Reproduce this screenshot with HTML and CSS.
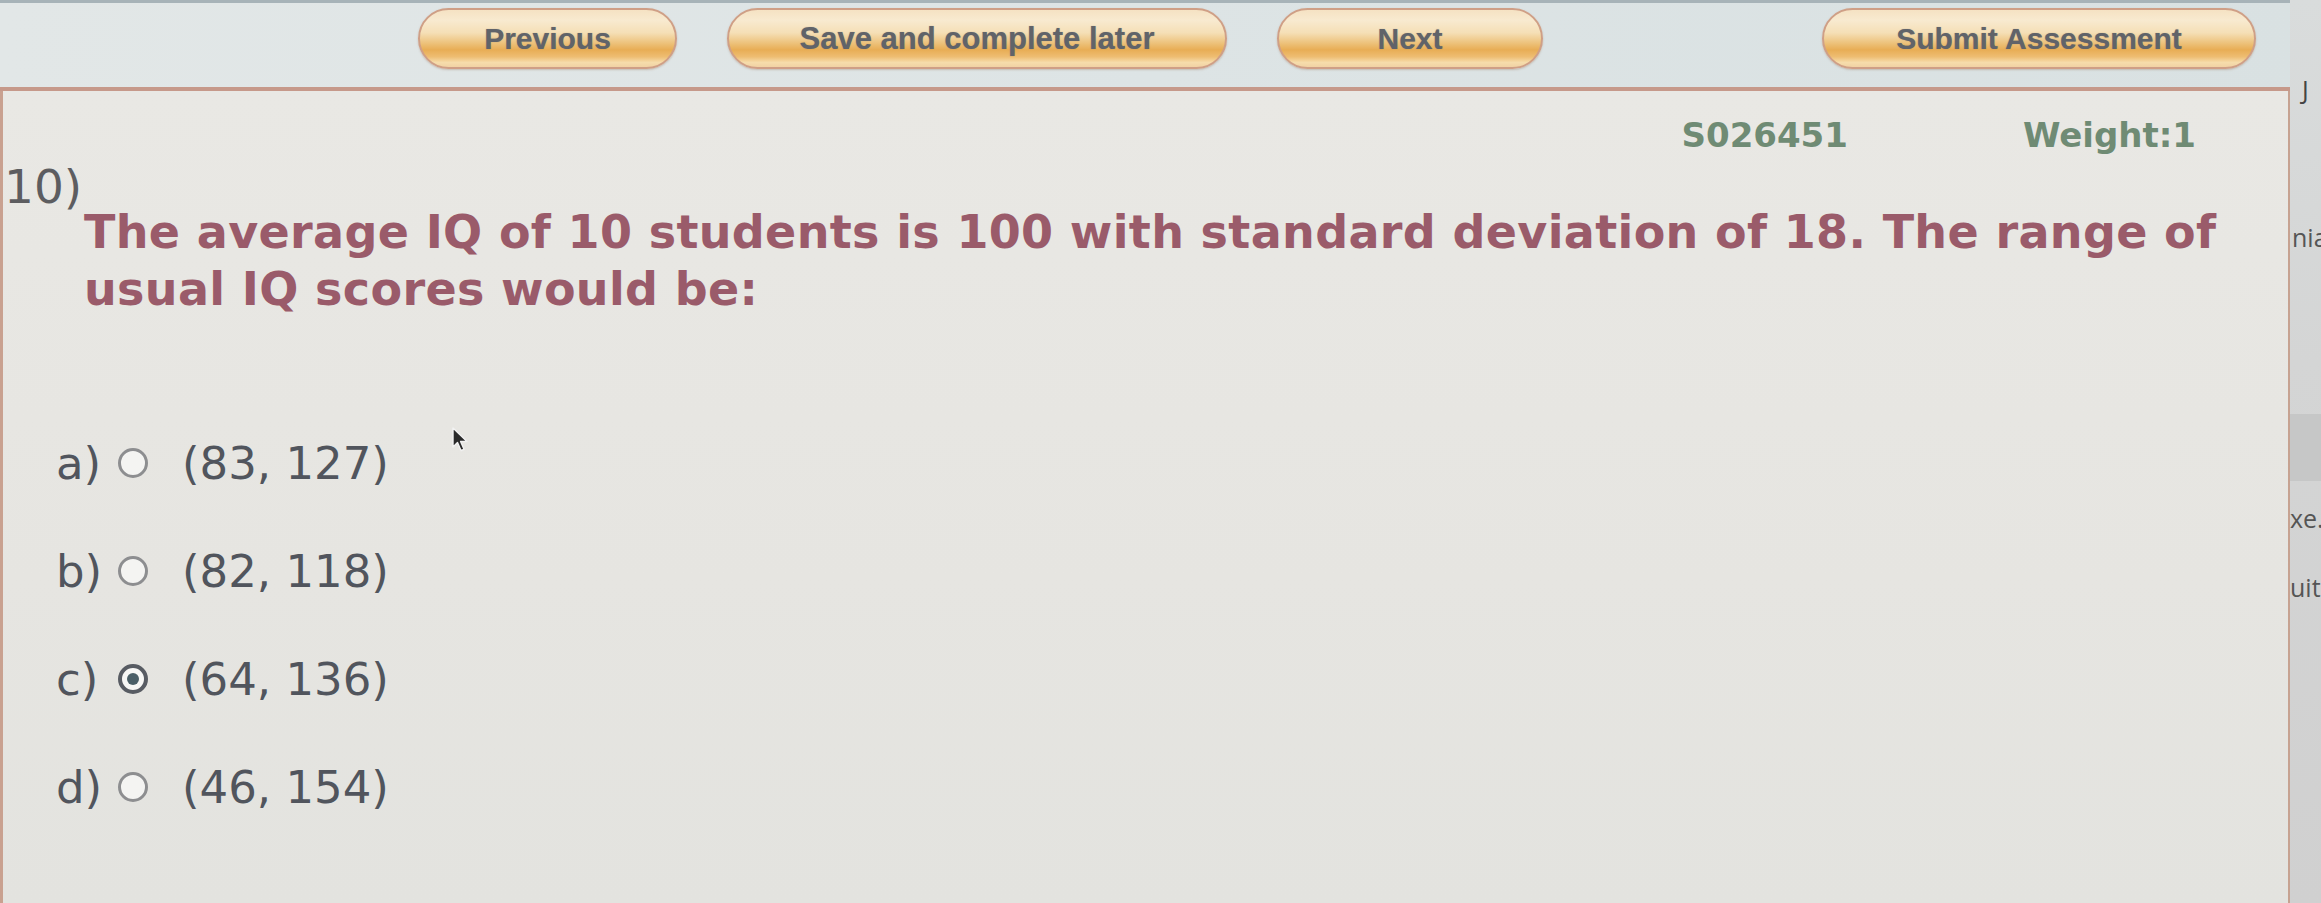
FILE: index.html
```html
<!DOCTYPE html>
<html lang="en">
<head>
<meta charset="utf-8">
<title>Assessment</title>
<link rel="stylesheet" href="styles.css">
</head>
<body>
<div class="app">
  <div class="main">
    <div class="toolbar">
      <button class="btn btn-prev">Previous</button>
      <button class="btn btn-save">Save and complete later</button>
      <button class="btn btn-next">Next</button>
      <button class="btn btn-submit">Submit Assessment</button>
    </div>
    <div class="panel">
      <div class="meta">
        <span class="code">S026451</span>
        <span class="weight">Weight:1</span>
      </div>
      <div class="qnum">10)</div>
      <div class="question">The average IQ of 10 students is 100 with standard deviation of 18. The range of usual IQ scores would be:</div>
      <div class="options">
        <div class="opt"><span class="letter">a)</span><span class="radio"></span><span class="val">(83, 127)</span></div>
        <div class="opt"><span class="letter">b)</span><span class="radio"></span><span class="val">(82, 118)</span></div>
        <div class="opt"><span class="letter">c)</span><span class="radio checked"></span><span class="val">(64, 136)</span></div>
        <div class="opt"><span class="letter">d)</span><span class="radio"></span><span class="val">(46, 154)</span></div>
      </div>
      <svg class="cursor" width="18" height="26" viewBox="0 0 18 26"><path d="M1 1 L1 20 L5.5 15.5 L9 23.5 L12 22.3 L8.6 14.5 L15 14.5 Z" fill="#2a2a2a" stroke="#f2f2f2" stroke-width="1.4" stroke-linejoin="round"/></svg>
    </div>
  </div>
  <div class="side">
    <div class="side-top">J</div>
    <div class="side-txt s1">nia</div>
    <div class="side-band"></div>
    <div class="side-txt s2">xe.</div>
    <div class="side-txt s3">uit.</div>
  </div>
</div>
</body>
</html>
```
FILE: styles.css
```css
html, body {
  margin: 0;
  padding: 0;
}
body {
  width: 2321px;
  height: 903px;
  overflow: hidden;
  background: #d4d6d6;
  font-family: "DejaVu Sans", Verdana, sans-serif;
}
.app {
  display: grid;
  grid-template-columns: 2290px 31px;
  height: 903px;
}
.main {
  display: flex;
  flex-direction: column;
  height: 903px;
}
.toolbar {
  height: 91px;
  flex: none;
  box-sizing: border-box;
  border-top: 3px solid #a7b3b8;
  border-bottom: 4px solid #c6998a;
  background: linear-gradient(to right, #e2e7e7 0%, #dde4e5 50%, #d9e1e2 100%);
  display: flex;
  align-items: flex-start;
  padding-left: 418px;
  padding-top: 5px;
  width: 2305px;
}
.btn {
  height: 61px;
  box-sizing: border-box;
  border: 2px solid #cf9f86;
  border-radius: 31px;
  background: linear-gradient(to bottom,
    #f5e2c3 0%, #f8ead0 18%, #f5dfb6 40%, #edc27b 58%,
    #e8ad55 70%, #eebd72 82%, #f6dcab 92%, #f1d2a4 100%);
  color: #606369;
  font-family: "Liberation Sans", Arial, sans-serif;
  font-weight: bold;
  font-size: 30px;
  padding: 0;
  margin: 0;
  text-shadow: 0 0 1px rgba(90, 90, 95, 0.5);
  box-shadow: 0 1px 2px rgba(150, 110, 80, 0.35);
}
.btn-prev { width: 259px; }
.btn-save { width: 500px; margin-left: 50px; font-size: 31px; }
.btn-next { width: 266px; margin-left: 50px; }
.btn-submit { width: 434px; margin-left: 279px; }

.panel {
  position: relative;
  flex: 1;
  background: linear-gradient(to bottom, #e9e8e4 0%, #e6e5e1 60%, #e3e3df 100%);
  border-left: 3px solid #c9a190;
  border-right: 2px solid #c6a291;
  padding-top: 24px;
}
.meta {
  display: flex;
  justify-content: flex-end;
  gap: 175px;
  padding-right: 92px;
  height: 40px;
  line-height: 40px;
  font-weight: bold;
  font-size: 34px;
  color: #6f8b74;
}
.qnum {
  margin-top: 15px;
  margin-left: 1px;
  height: 34px;
  line-height: 34px;
  font-size: 47px;
  color: #5d5d60;
}
.question {
  margin-left: 81px;
  width: 2170px;
  font-weight: bold;
  font-size: 46px;
  letter-spacing: 0.35px;
  line-height: 57px;
  color: #9a5b6a;
}
.options {
  margin-top: 91px;
  margin-left: 53px;
  display: flex;
  flex-direction: column;
}
.opt {
  height: 108px;
  display: flex;
  align-items: center;
  font-size: 45px;
  color: #51555d;
}
.letter {
  width: 62px;
}
.radio {
  width: 30px;
  height: 30px;
  box-sizing: border-box;
  border-radius: 50%;
  border: 3px solid #8d8e90;
  background: #f4f4f2;
  margin-right: 34px;
  display: flex;
  align-items: center;
  justify-content: center;
}
.radio.checked {
  border: 4px solid #585c63;
  background: #f7f7f5;
}
.radio.checked::after {
  content: "";
  width: 12px;
  height: 12px;
  border-radius: 50%;
  background: #4b5f67;
}
.cursor {
  position: absolute;
  left: 449px;
  top: 336px;
}

.side {
  background: linear-gradient(to bottom, #d9dcdc 0%, #d4d5d5 40%, #d0d0d0 100%);
  display: flex;
  flex-direction: column;
  font-family: "Open Sans", "DejaVu Sans", sans-serif;
  font-size: 25px;
  color: #555;
  overflow: hidden;
}
.side-top {
  margin-top: 74px;
  margin-left: 12px;
  height: 30px;
  line-height: 30px;
  color: #444;
}
.side-txt {
  height: 30px;
  line-height: 30px;
  white-space: nowrap;
}
.s1 { margin-top: 118px; margin-left: 2px; }
.side-band {
  margin-top: 162px;
  height: 67px;
  background: #c6c7c7;
}
.s2 { margin-top: 22px; margin-left: 0; }
.s3 { margin-top: 39px; margin-left: 0; }
```
